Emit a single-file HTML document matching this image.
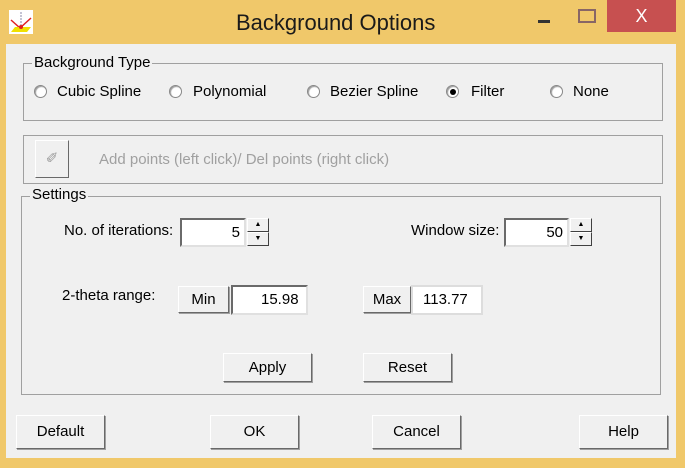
<!DOCTYPE html>
<html><head><meta charset="utf-8"><style>
*{margin:0;padding:0;box-sizing:border-box}
body{width:685px;height:468px;background:#F0C86A;position:relative;overflow:hidden;font-family:"Liberation Sans",sans-serif;font-size:15px;color:#000}
.a{position:absolute}
#client{left:6px;top:44px;width:670px;height:414px;background:#F0F0F0}
.grp{position:absolute;border:1px solid #A0A0A0}
.lbl{position:absolute;background:#F0F0F0;padding:0 2px;line-height:16px}
.btn{position:absolute;background:#F0F0F0;border:1px solid;border-color:#fff #696969 #696969 #fff;box-shadow:1px 1px 0 #A0A0A0;text-align:center;font-size:15px}
.fld{position:absolute;background:#fff;border:2px solid;border-color:#6a6a6a #e0e0e0 #e0e0e0 #6a6a6a;text-align:right;padding-right:4px;font-size:15px}
.rad{position:absolute;width:13px;height:13px;border-radius:50%;background:#fff;border:1px solid #888;box-shadow:inset 1px 1px 1px #999}
.t{position:absolute;line-height:16px;white-space:nowrap}
.sp{position:absolute;width:22px;height:14px;background:#F0F0F0;border:1px solid;border-color:#fff #404040 #404040 #fff;font-size:7px;text-align:center;line-height:12px}
</style></head><body>
<svg class="a" style="left:9px;top:10px" width="24" height="24" viewBox="0 0 24 24"><rect width="24" height="24" fill="#fff"/><path d="M12 2V18" stroke="#88a" stroke-dasharray="2 1"/><path d="M2 10L11 18L22 8" stroke="#e02020" stroke-width="1.5" fill="none"/><path d="M2 22L6 17H22L18 22Z" fill="#f0e000"/><circle cx="12" cy="17" r="2" fill="#e02020"/></svg>
<div class="t" style="left:236px;top:10px;font-size:22px;line-height:26px;color:#1a1a1a">Background Options</div>
<div class="a" style="left:538px;top:20px;width:12px;height:3px;background:#333"></div>
<div class="a" style="left:578px;top:9px;width:18px;height:14px;border:2px solid #866"></div>
<div class="a" style="left:607px;top:0;width:69px;height:32px;background:#C75050;color:#fff;font-size:18px;text-align:center;line-height:32px">X</div>
<div class="a" id="client"></div>
<div class="grp" style="left:23px;top:63px;width:640px;height:58px"></div>
<div class="lbl" style="left:32px;top:55px">Background Type</div>
<div class="rad" style="left:34px;top:85px"></div><div class="t" style="left:57px;top:84px">Cubic Spline</div>
<div class="rad" style="left:169px;top:85px"></div><div class="t" style="left:193px;top:84px">Polynomial</div>
<div class="rad" style="left:307px;top:85px"></div><div class="t" style="left:330px;top:84px">Bezier Spline</div>
<div class="rad" style="left:446px;top:85px"></div><div class="a" style="left:450px;top:89px;width:6px;height:6px;border-radius:50%;background:#000"></div><div class="t" style="left:471px;top:84px">Filter</div>
<div class="rad" style="left:550px;top:85px"></div><div class="t" style="left:573px;top:84px">None</div>
<div class="grp" style="left:23px;top:135px;width:640px;height:49px"></div>
<div class="btn" style="left:35px;top:140px;width:34px;height:38px;box-shadow:none;color:#999;line-height:36px">&#x2710;</div>
<div class="t" style="left:99px;top:152px;color:#A0A0A0">Add points (left click)/ Del points (right click)</div>
<div class="grp" style="left:21px;top:196px;width:640px;height:199px"></div>
<div class="lbl" style="left:30px;top:187px">Settings</div>
<div class="t" style="left:64px;top:223px">No. of iterations:</div>
<div class="fld" style="left:180px;top:218px;width:66px;height:29px;line-height:25px">5</div>
<div class="sp" style="left:247px;top:218px">&#9650;</div><div class="sp" style="left:247px;top:232px">&#9660;</div>
<div class="t" style="left:411px;top:223px">Window size:</div>
<div class="fld" style="left:504px;top:218px;width:65px;height:29px;line-height:25px">50</div>
<div class="sp" style="left:570px;top:218px">&#9650;</div><div class="sp" style="left:570px;top:232px">&#9660;</div>
<div class="t" style="left:62px;top:288px">2-theta range:</div>
<div class="btn" style="left:178px;top:286px;width:51px;height:27px;line-height:25px">Min</div>
<div class="fld" style="left:231px;top:285px;width:77px;height:30px;line-height:26px;text-align:left;padding-left:28px">15.98</div>
<div class="btn" style="left:363px;top:286px;width:48px;height:27px;line-height:25px">Max</div>
<div class="fld" style="left:411px;top:285px;width:72px;height:30px;line-height:26px;text-align:left;padding-left:10px;border-color:#ddd">113.77</div>
<div class="btn" style="left:223px;top:353px;width:89px;height:29px;line-height:27px">Apply</div>
<div class="btn" style="left:363px;top:353px;width:89px;height:29px;line-height:27px">Reset</div>
<div class="btn" style="left:16px;top:415px;width:89px;height:34px;line-height:32px">Default</div>
<div class="btn" style="left:210px;top:415px;width:89px;height:34px;line-height:32px">OK</div>
<div class="btn" style="left:372px;top:415px;width:89px;height:34px;line-height:32px">Cancel</div>
<div class="btn" style="left:579px;top:415px;width:89px;height:34px;line-height:32px">Help</div>
</body></html>
